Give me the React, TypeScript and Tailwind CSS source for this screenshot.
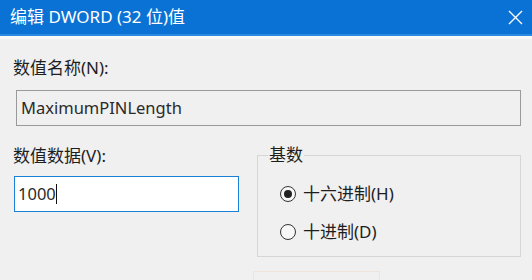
import React from 'react';

const font = { fontFamily: '"Noto Sans", "Noto Sans CJK SC", sans-serif' };

const Radio: React.FC<{ label: string; checked?: boolean }> = ({ label, checked }) => (
    <div className="flex items-center h-[20px]">
        <span className="w-[16px] h-[16px] rounded-full border border-[#333333] bg-[#f7f7f7] flex items-center justify-center">
            {checked && <span className="w-[8px] h-[8px] rounded-full bg-[#222222]" />}
        </span>
        <span className="ml-[7px] text-[17px] leading-[20px] text-[#1e1e1e]">{label}</span>
    </div>
);

export default function App() {
    return (
        <div className="w-[532px] h-[280px] bg-[#f0f0f0] overflow-hidden" style={font}>
            {/* 标题栏 */}
            <div className="h-[34px] bg-[#0a72d4] flex items-center pl-[10px] pr-[9px]">
                <span className="text-white text-[17px] leading-[20px] mt-[-1px]">编辑 DWORD (32 位)值</span>
                <svg className="ml-auto" width="15" height="15" viewBox="0 0 15 15">
                    <path d="M1 1 L14 14 M14 1 L1 14" stroke="#ffffff" strokeWidth="1.4" fill="none" />
                </svg>
            </div>
            <div className="h-[2px] bg-[#2a8ae2]" />
            <div className="h-[3px] bg-[#f7f7f7]" />

            <div className="pl-[13px] pr-[11px] pt-[19px]">
                <div className="text-[17px] leading-[20px] text-[#1e1e1e]">数值名称(N):</div>
                <div className="mt-[12px] ml-[3px] h-[36px] border border-[#9a9a9a] bg-[#f0f0f0] flex items-center pl-[4px]">
                    <span className="text-[16.5px] leading-[20px] text-[#2a2a2a]">MaximumPINLength</span>
                </div>

                <div className="flex mt-[19px]">
                    <div className="w-[226px] pt-[1px]">
                        <div className="text-[17px] leading-[20px] text-[#1e1e1e]">数值数据(V):</div>
                        <div className="mt-[10px] ml-[1px] h-[36px] border border-[#1a7fd6] bg-white flex items-center pl-[3px]">
                            <span className="text-[16.5px] leading-[20px] text-[#2a2a2a]">1000</span>
                            <span className="w-[1px] h-[20px] bg-[#111111]" />
                        </div>
                    </div>
                    <fieldset className="ml-auto w-[264px] h-[112px] border border-[#d6d6d6] pl-[22px] pt-[19px]">
                        <legend className="ml-[-12px] px-[1px] text-[17px] leading-[20px] text-[#1e1e1e]">基数</legend>
                        <Radio label="十六进制(H)" checked />
                        <div className="mt-[18px]">
                            <Radio label="十进制(D)" />
                        </div>
                    </fieldset>
                </div>

                <div className="mt-[14px] ml-[240px] w-[127px] h-[12px] border-t border-x border-[#efe3da]" />
            </div>
        </div>
    );
}
